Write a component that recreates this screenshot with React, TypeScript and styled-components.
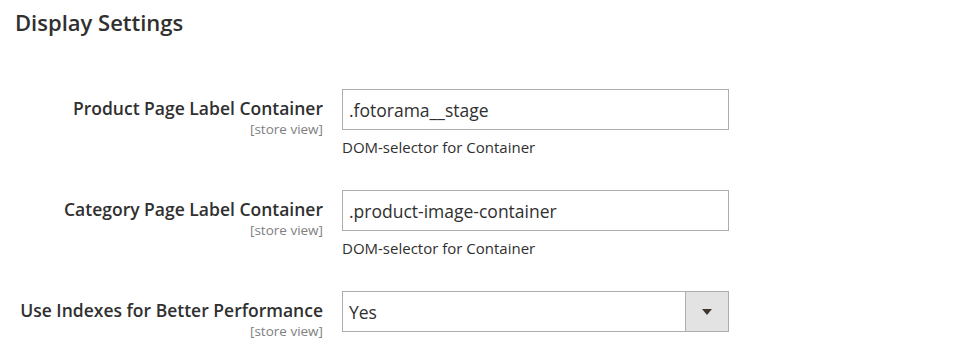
import React from "react";
import styled, { createGlobalStyle } from "styled-components";

const GlobalStyle = createGlobalStyle`
  body {
    margin: 0;
    background: #ffffff;
    font-family: "Open Sans", "Noto Sans", sans-serif;
    color: #303030;
  }
`;

interface Field {
  label: string;
  scope: string;
  value: string;
  note?: string;
  select?: boolean;
}

const fields: Field[] = [
  {
    label: "Product Page Label Container",
    scope: "[store view]",
    value: ".fotorama__stage",
    note: "DOM-selector for Container",
  },
  {
    label: "Category Page Label Container",
    scope: "[store view]",
    value: ".product-image-container",
    note: "DOM-selector for Container",
  },
  {
    label: "Use Indexes for Better Performance",
    scope: "[store view]",
    value: "Yes",
    select: true,
  },
];

const Section = styled.section`
  padding: 8px 15px 0;
`;

const Title = styled.h2`
  margin: 0;
  font-size: 22px;
  line-height: 28px;
  font-weight: 600;
  color: #303030;
`;

const Rows = styled.div`
  display: flex;
  flex-direction: column;
  gap: 20px;
  margin-top: 53px;
`;

const Row = styled.div`
  display: grid;
  grid-template-columns: 308px 387px;
  column-gap: 19px;
  min-height: 81px;
`;

const LabelCell = styled.div`
  display: flex;
  flex-direction: column;
  align-items: flex-end;
  padding-top: 7px;
`;

const Label = styled.label`
  font-size: 17.5px;
  line-height: 24px;
  font-weight: 600;
  color: #303030;
  white-space: nowrap;
`;

const Scope = styled.span`
  font-size: 13.5px;
  line-height: 18px;
  color: #808080;
  white-space: nowrap;
`;

const Control = styled.div`
  display: flex;
  flex-direction: column;
`;

const TextInput = styled.div`
  box-sizing: border-box;
  height: 41px;
  border: 1px solid #adadad;
  padding: 0 6px;
  display: flex;
  align-items: center;
  font-size: 17.5px;
  color: #303030;
  background: #fff;
`;

const SelectBox = styled(TextInput)`
  padding: 0 0 0 6px;
  justify-content: space-between;
  align-items: stretch;
`;

const SelectValue = styled.span`
  display: flex;
  align-items: center;
`;

const SelectButton = styled.span`
  width: 42px;
  background: #e3e3e3;
  border-left: 1px solid #adadad;
  display: flex;
  align-items: center;
  justify-content: center;
`;

const Arrow = styled.span`
  width: 0;
  height: 0;
  border-left: 5px solid transparent;
  border-right: 5px solid transparent;
  border-top: 6px solid #41362f;
`;

const Note = styled.div`
  margin-top: 7px;
  font-size: 15px;
  line-height: 20px;
  color: #303030;
`;

export default function App() {
  return (
    <>
      <GlobalStyle />
      <Section>
        <Title>Display Settings</Title>
        <Rows>
          {fields.map((f) => (
            <Row key={f.label}>
              <LabelCell>
                <Label>{f.label}</Label>
                <Scope>{f.scope}</Scope>
              </LabelCell>
              <Control>
                {f.select ? (
                  <SelectBox>
                    <SelectValue>{f.value}</SelectValue>
                    <SelectButton>
                      <Arrow />
                    </SelectButton>
                  </SelectBox>
                ) : (
                  <TextInput>{f.value}</TextInput>
                )}
                {f.note && <Note>{f.note}</Note>}
              </Control>
            </Row>
          ))}
        </Rows>
      </Section>
    </>
  );
}
